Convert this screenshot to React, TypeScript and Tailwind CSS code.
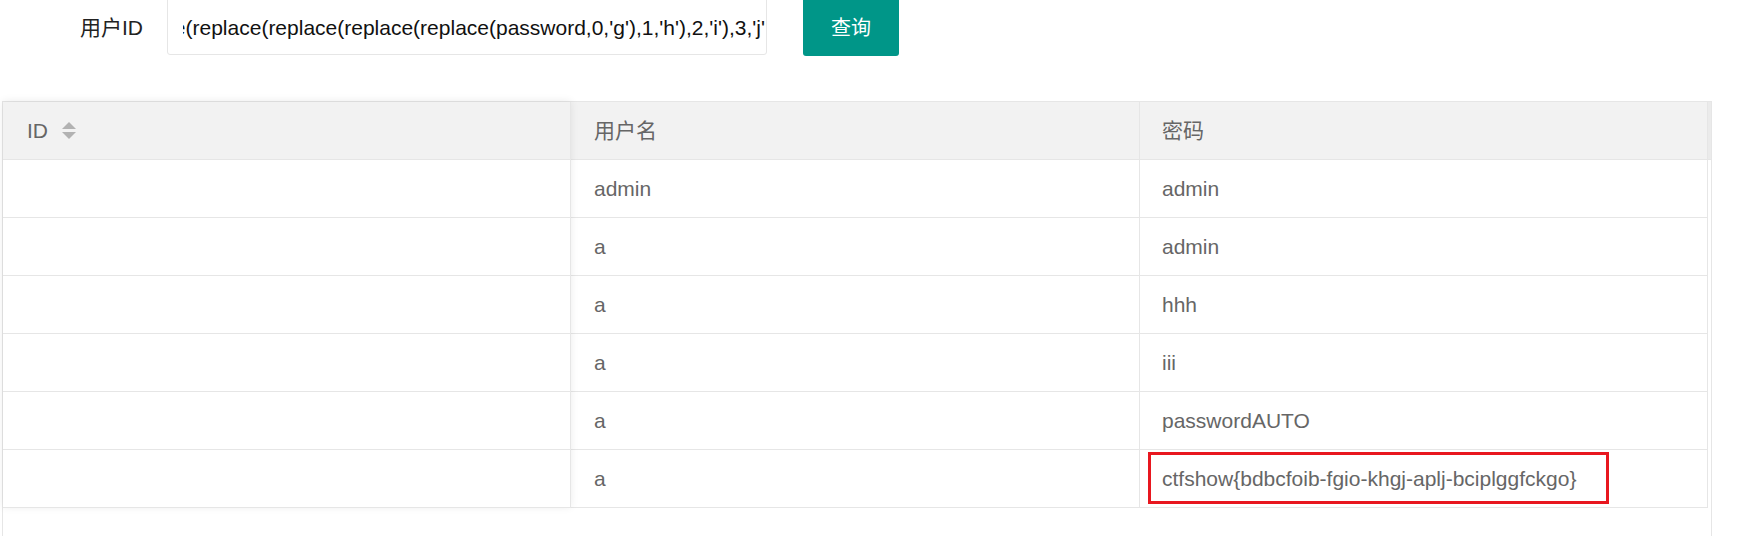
import React from 'react';

const FONT = '"Liberation Sans", Arial, "Noto Sans CJK SC", sans-serif';

const ROWS = [
  { name: 'admin', pass: 'admin' },
  { name: 'a', pass: 'admin' },
  { name: 'a', pass: 'hhh' },
  { name: 'a', pass: 'iii' },
  { name: 'a', pass: 'passwordAUTO' },
  { name: 'a', pass: 'ctfshow{bdbcfoib-fgio-khgj-aplj-bciplggfckgo}', marked: true },
];

function SortIcon() {
  return (
    <svg width="14" height="17" viewBox="0 0 14 17" className="ml-[14px]">
      <polygon points="7,0 14,7 0,7" fill="#b2b2b2" />
      <polygon points="0,10 14,10 7,17" fill="#b2b2b2" />
    </svg>
  );
}

export default function App() {
  const query =
    "replace(replace(replace(replace(replace(password,0,'g'),1,'h'),2,'i'),3,'j'";

  return (
    <div
      className="w-[1743px] h-[536px] bg-white overflow-hidden flex flex-col"
      style={{ fontFamily: FONT }}
    >
      {/* search form */}
      <div className="flex items-start -mt-[3px] shrink-0">
        <div className="w-[167px] h-[58px] flex items-center justify-end pr-[24px] pt-[4px] text-[21px] text-[#222]">
          用户ID
        </div>
        <div className="w-[600px] h-[58px] border border-[#e6e6e6] rounded-[3px] bg-white flex items-center pt-[3px]">
          <div className="ml-[15px] mr-[1px] flex-1 flex justify-end overflow-hidden whitespace-nowrap text-[21px] text-[#111]">
            {query}
          </div>
        </div>
        <button className="ml-[36px] w-[96px] h-[59px] rounded-[3px] bg-[#009688] text-white text-[20px] flex items-center justify-center pt-[2px]">
          查询
        </button>
      </div>

      {/* table */}
      <div className="mt-[45px] ml-[2px] w-[1710px] flex-1 border border-b-0 border-[#e6e6e6] flex text-[21px] text-[#666]">
        {/* fixed left column */}
        <div className="w-[568px] self-start relative z-10 bg-white shadow-[0_-1px_8px_rgba(0,0,0,0.08)]">
          <div className="h-[57px] bg-[#f2f2f2] border-r border-[#e6e6e6] flex items-center pl-[24px]">
            <span>ID</span>
            <SortIcon />
          </div>
          {ROWS.map((_, i) => (
            <div key={i} className="h-[58px] border-t border-r border-[#e6e6e6] bg-white" />
          ))}
          <div className="border-t border-[#e6e6e6]" />
        </div>

        {/* scrolling columns */}
        <div className="flex-1 flex flex-col">
          <div className="h-[58px] flex bg-[#f2f2f2] border-b border-[#e6e6e6]">
            <div className="w-[569px] border-r border-[#e6e6e6] flex items-center pl-[23px]">用户名</div>
            <div className="w-[568px] border-r border-[#e6e6e6] flex items-center pl-[22px]">密码</div>
            <div className="flex-1 bg-[#ebebeb]" />
          </div>
          {ROWS.map((row, i) => (
            <div key={i} className="h-[58px] flex">
              <div className="w-[569px] border-r border-b border-[#e6e6e6] flex items-center pl-[23px]">
                {row.name}
              </div>
              <div className="w-[568px] border-r border-b border-[#e6e6e6] flex items-center pl-[22px] relative">
                {row.pass}
                {row.marked && (
                  <div className="absolute left-[8px] top-[2px] w-[461px] h-[52px] border-[3px] border-[#e8171f] pointer-events-none" />
                )}
              </div>
            </div>
          ))}
        </div>
      </div>
    </div>
  );
}
